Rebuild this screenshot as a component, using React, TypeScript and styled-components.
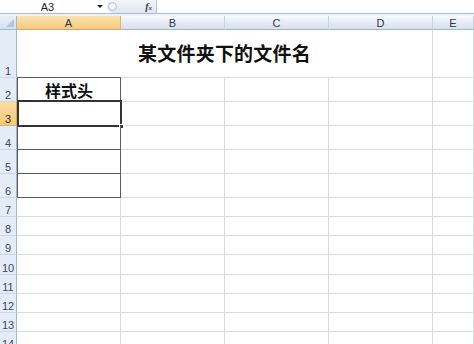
import React from 'react';
import styled, { createGlobalStyle, css } from 'styled-components';

const GlobalStyle = createGlobalStyle`
    html, body {
        margin: 0;
        padding: 0;
        overflow: hidden;
        background: #ffffff;
    }
    body {
        font-family: "Liberation Sans", Arial, sans-serif;
    }
`

const Window = styled.div`
    width: 474px;
    height: 344px;
    display: flex;
    flex-direction: column;
    background: #ffffff;
    overflow: hidden;
`

const FormulaBar = styled.div`
    height: 13px;
    flex-shrink: 0;
    display: flex;
    align-items: stretch;
    border-bottom: 1px solid #a7bcd8;
    background: #ffffff;
`

const NameBox = styled.div`
    width: 95px;
    display: flex;
    align-items: center;
    justify-content: center;
    font-size: 11px;
    color: #1e1e1e;
    padding-top: 1px;
`

const DropArrow = styled.div`
    width: 10px;
    display: flex;
    align-items: center;
    justify-content: center;
    &::after {
        content: '';
        border-left: 3px solid transparent;
        border-right: 3px solid transparent;
        border-top: 3px solid #1a1a1a;
    }
`

const FxGroup = styled.div`
    margin-left: 2px;
    width: 50px;
    display: flex;
    align-items: center;
    justify-content: space-between;
    border-radius: 7px 0 0 7px;
    border-right: 1px solid #b7c6da;
    background: linear-gradient(to bottom, #f3f6fa 0%, #dfe6ef 100%);
    padding: 0 4px 0 1px;
    box-sizing: border-box;
`

const Knob = styled.span`
    width: 9px;
    height: 9px;
    border-radius: 50%;
    border: 1px solid #b9c4d2;
    background: radial-gradient(circle at 40% 35%, #ffffff 0%, #dfe5ee 100%);
    box-sizing: border-box;
`

const FxLabel = styled.span`
    font-family: "Liberation Serif", "Times New Roman", serif;
    font-style: italic;
    font-weight: bold;
    font-size: 10px;
    color: #3c3c3c;
    & small {
        font-size: 7px;
    }
`

const FormulaInput = styled.div`
    flex: 1;
    background: #ffffff;
`

const Spacer = styled.div`
    height: 2px;
    flex-shrink: 0;
    background: #eef2f8;
`

// header row, then rows 1..14
const rowHeights = [14, 48, 24, 24, 24, 24, 24, 19, 19, 19, 20, 19, 19, 19, 19]

const Sheet = styled.div`
    flex: 1;
    min-height: 0;
    overflow: hidden;
    display: grid;
    grid-template-columns: 17px 104px 104px 104px 104px 1fr;
    grid-template-rows: ${rowHeights.map((h) => `${h}px`).join(' ')};
`

const Corner = styled.div`
    background: linear-gradient(to bottom, #e9eff7, #d6e0ed);
    border-right: 1px solid #9eb6ce;
    border-bottom: 1px solid #9eb6ce;
    display: flex;
    align-items: flex-end;
    justify-content: flex-end;
    padding: 0 2px 2px 0;
    box-sizing: border-box;
    &::after {
        content: '';
        border-left: 8px solid transparent;
        border-bottom: 8px solid #b5c6dc;
    }
`

const ColHeader = styled.div<{ $active?: boolean }>`
    display: flex;
    align-items: center;
    justify-content: center;
    font-size: 11px;
    color: #27374a;
    box-sizing: border-box;
    border-right: 1px solid #c5d3e3;
    border-bottom: 1px solid #9eb6ce;
    background: linear-gradient(to bottom, #f8fafd 0%, #e4ebf4 55%, #d8e1ec 100%);
    ${(p) => p.$active && css`
        background: linear-gradient(to bottom, #fbe3b4 0%, #f8d597 55%, #f4c97d 100%);
        border-right-color: #e6b15a;
        border-bottom-color: #e3a84c;
    `}
`

const RowHeader = styled.div<{ $active?: boolean }>`
    display: flex;
    align-items: flex-end;
    justify-content: center;
    font-size: 11px;
    line-height: 11px;
    color: #384a62;
    box-sizing: border-box;
    background: #e4ecf7;
    border-right: 1px solid #9eb6ce;
    border-bottom: 1px solid #c9d7e8;
    ${(p) => p.$active && css`
        background: linear-gradient(to bottom, #fbdca3, #f7c975);
        border-right-color: #e3a84c;
        border-bottom-color: #e6b15a;
        color: #2a2a2a;
    `}
`

const Cell = styled.div<{ $boxed?: boolean; $top?: boolean }>`
    position: relative;
    box-sizing: border-box;
    border-right: 1px solid #dadcdf;
    border-bottom: 1px solid #dadcdf;
    display: flex;
    align-items: center;
    justify-content: center;
    font-family: "Noto Sans CJK SC", "Liberation Sans", sans-serif;
    ${(p) => p.$boxed && css`
        border-left: 1px solid #5b5b5b;
        border-right-color: #5b5b5b;
        border-bottom-color: #5b5b5b;
        z-index: 1;
    `}
    ${(p) => p.$top && css`
        margin-top: -1px;
        border-top: 1px solid #5b5b5b;
    `}
`

const TitleCell = styled(Cell)`
    grid-column: 2 / 6;
    font-size: 19px;
    font-weight: bold;
    color: #111111;
    padding-bottom: 2px;
    letter-spacing: 0.2px;
`

const HeadText = styled.span`
    font-size: 16px;
    font-weight: bold;
    color: #111111;
    padding-top: 1px;
`

const Selection = styled.div`
    position: absolute;
    top: -2px;
    left: -1px;
    right: -2px;
    bottom: -2px;
    border: 2px solid #333333;
    pointer-events: none;
    z-index: 2;
`

const FillHandle = styled.span`
    position: absolute;
    right: -4px;
    bottom: -4px;
    width: 5px;
    height: 5px;
    background: #333333;
    border: 1px solid #ffffff;
    box-sizing: border-box;
`

const columns = ['A', 'B', 'C', 'D', 'E']

export default function App() {
    const rows = Array.from({ length: 14 }, (_, i) => i + 1)
    return (
        <Window>
            <GlobalStyle />
            <FormulaBar>
                <NameBox>A3</NameBox>
                <DropArrow />
                <FxGroup>
                    <Knob />
                    <FxLabel>f<small>x</small></FxLabel>
                </FxGroup>
                <FormulaInput />
            </FormulaBar>
            <Spacer />
            <Sheet>
                <Corner />
                {columns.map((c) => (
                    <ColHeader key={c} $active={c === 'A'}>{c}</ColHeader>
                ))}
                {rows.map((r) => {
                    if (r === 1) {
                        return (
                            <React.Fragment key={r}>
                                <RowHeader>1</RowHeader>
                                <TitleCell>某文件夹下的文件名</TitleCell>
                                <Cell />
                            </React.Fragment>
                        )
                    }
                    return (
                        <React.Fragment key={r}>
                            <RowHeader $active={r === 3}>{r}</RowHeader>
                            {columns.map((c) => {
                                const boxed = c === 'A' && r >= 2 && r <= 6
                                return (
                                    <Cell key={c} $boxed={boxed} $top={boxed && r === 2}>
                                        {c === 'A' && r === 2 && <HeadText>样式头</HeadText>}
                                        {c === 'A' && r === 3 && (
                                            <Selection>
                                                <FillHandle />
                                            </Selection>
                                        )}
                                    </Cell>
                                )
                            })}
                        </React.Fragment>
                    )
                })}
            </Sheet>
        </Window>
    )
}
